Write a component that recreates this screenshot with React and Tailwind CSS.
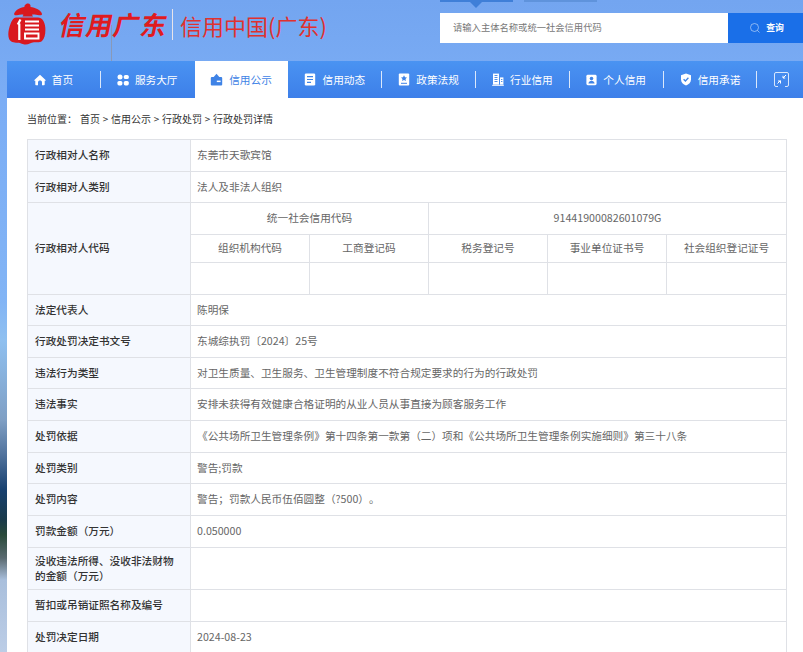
import React from "react";

const FONT = "font-['Noto_Sans_CJK_SC','Liberation_Sans',sans-serif]";

function HomeIcon() {
  return (
    <svg width="12" height="12" viewBox="0 0 12 12" fill="currentColor">
      <path d="M6 .8 11.6 6c.3.3.1.8-.3.8h-.6v3.8c0 .4-.3.7-.7.7H8V8.2C8 7.3 7 6.6 6 6.6S4 7.3 4 8.2v3.1H2c-.4 0-.7-.3-.7-.7V6.800H.7c-.4 0-.6-.5-.3-.8z" />
    </svg>
  );
}

function GridIcon() {
  return (
    <svg width="12" height="12" viewBox="0 0 12 12" fill="currentColor">
      <circle cx="3" cy="3" r="2.500" />
      <rect x="6.800" y="1" width="5" height="4" rx="1.600" />
      <rect x=".4" y="7" width="5" height="4.400" rx="1.600" />
      <rect x="6.800" y="7" width="5" height="4.400" rx="1.600" />
    </svg>
  );
}

function PublicIcon() {
  return (
    <svg width="13" height="13" viewBox="0 0 13 13">
      <path d="M6.500 .8 9.300 4H3.700z" fill="#3f83e6" />
      <rect x=".8" y="4" width="11.400" height="8.400" rx="1" fill="#3f83e6" />
      <rect x="6.800" y="7.600" width="3.800" height="1.500" fill="#fff" />
    </svg>
  );
}

function DocIcon() {
  return (
    <svg width="12" height="13" viewBox="0 0 12 13">
      <rect x=".8" y=".6" width="10.400" height="11.800" rx="1.200" fill="#fff" />
      <path d="M3 3.700h6M3 6.500h6M3 9.300h4" stroke="#3f83e6" strokeWidth="1.200" />
    </svg>
  );
}

function PolicyIcon() {
  return (
    <svg width="12" height="13" viewBox="0 0 12 13">
      <rect x=".8" y=".4" width="10.400" height="12.200" rx="1" fill="#fff" />
      <path d="M6 2.200 7 4.300l2 .2-1.500 1.500.4 2L6 7 4.100 8l.4-2L3 4.500l2-.2z" fill="#3f83e6" />
      <path d="M3 10.300h6" stroke="#3f83e6" strokeWidth="1" />
    </svg>
  );
}

function BuildingIcon() {
  return (
    <svg width="12" height="13" viewBox="0 0 12 13" fill="#fff">
      <rect x="1" y=".6" width="6" height="11" />
      <rect x="8" y="4.400" width="3.400" height="7.200" />
      <rect x=".2" y="11.800" width="11.600" height="1" />
      <path d="M2.500 2.500h3M2.500 4.500h3M2.500 6.500h3M2.500 8.500h3M9 6.500h1.400M9 8.500h1.400" stroke="#3f83e6" strokeWidth=".9" />
    </svg>
  );
}

function PersonIcon() {
  return (
    <svg width="11" height="12" viewBox="0 0 11 12">
      <rect x=".4" y=".8" width="10.200" height="10.400" rx="1.400" fill="#fff" />
      <circle cx="5.500" cy="4.600" r="1.800" fill="#3f83e6" />
      <path d="M2.400 9.400c.3-1.800 1.600-2.400 3.100-2.400s2.800.6 3.100 2.400z" fill="#3f83e6" />
    </svg>
  );
}

function ShieldIcon() {
  return (
    <svg width="12" height="13" viewBox="0 0 12 13">
      <path d="M6 .5 11 2.200v4.300c0 3-2.200 5-5 6-2.800-1-5-3-5-6V2.200z" fill="#fff" />
      <path d="M3.600 6.300 5.400 8l3-3.200" fill="none" stroke="#3f83e6" strokeWidth="1.300" />
    </svg>
  );
}

function ExpandIcon() {
  return (
    <svg width="15" height="15" viewBox="0 0 15 15" fill="none" stroke="#fff" strokeWidth=".8">
      <path d="M4 14.500H2A1.500 1.500 0 0 1 .5 13V2A1.500 1.500 0 0 1 2 .5h11A1.500 1.500 0 0 1 14.500 2v11a1.500 1.500 0 0 1-1.500 1.500h-2" />
      <path d="M12 3 9 6M9 3.800V6h2.200M3.500 11.500l3-3M4 9h2.500v2.500" strokeWidth="1" />
    </svg>
  );
}

function SearchIcon() {
  return (
    <svg width="10" height="10" viewBox="0 0 10 10" fill="none" stroke="#fff" strokeWidth=".7" className="opacity-70">
      <circle cx="4.500" cy="4.500" r="4" />
      <path d="m7.500 7.500 2 2" />
    </svg>
  );
}

function Logo() {
  return (
    <svg width="38" height="42" viewBox="0 0 38 42" className="shrink-0">
      <path d="M20 .5c2 0 3 2 2.500 3.500 4.500.3 11 3.500 11.500 7 .1 1-1 1.500-3 1.200-3-.5-6-1-7-.4l1 1.700H14.500l1-1.700c-1.500-.6-4-.2-6.500.4-2 .4-3.200-.3-2.900-1.400.8-3.300 5.900-6.500 10.400-6.900C16 2.500 18 .5 20 .5" fill="#d9181e" />
      <path d="M8 14.500h22c4 0 6.800 4 7.300 10 .4 6-.6 11-3.300 13.500-2 1.800-5 1-8 1.300-3.500.3-5 2.200-8.500 2.200-3 0-4-1.600-8-1.800-4-.2-7-.7-8.400-3.800C-.5 32 .5 26 2.500 21c1.400-3.500 3-6.500 5.500-6.500" fill="#d9181e" />
      <path d="M12.500 16.500 9.800 21.500M11.300 20.500v16.500" stroke="#fff" strokeWidth="2.200" fill="none" />
      <path d="M17 18.500h14M17 22.500h14M17 26.500h14M17 30.500h13.500v5H17z" stroke="#fff" strokeWidth="1.900" fill="none" />
    </svg>
  );
}

const navItems = [
  { label: "首页", icon: <HomeIcon />, divider: true },
  { label: "服务大厅", icon: <GridIcon />, divider: false },
  { label: "信用公示", icon: <PublicIcon />, active: true, divider: false },
  { label: "信用动态", icon: <DocIcon />, divider: true },
  { label: "政策法规", icon: <PolicyIcon />, divider: true },
  { label: "行业信用", icon: <BuildingIcon />, divider: true },
  { label: "个人信用", icon: <PersonIcon />, divider: true },
  { label: "信用承诺", icon: <ShieldIcon />, divider: true },
];

function Label({ children, rowSpan, className = "h-[32px]" }) {
  return (
    <td rowSpan={rowSpan} className={`${className} border border-[#dfe1e6] bg-[#f5f8fe] pb-[2px] pl-[7px] pr-2 text-[#333] font-medium leading-[15px]`}>
      {children}
    </td>
  );
}

function Row({ label, value, className }) {
  return (
    <tr>
      <Label className={className}>{label}</Label>
      <td colSpan={5} className="border border-[#dfe1e6] pb-px pl-[6px] text-[#666]">{value}</td>
    </tr>
  );
}

function Sub({ children, colSpan, className = "" }) {
  return (
    <td colSpan={colSpan} className={`${className} border border-[#dfe1e6] pb-px text-center text-[#666]`}>
      {children}
    </td>
  );
}

export default function App() {
  return (
    <div className={`${FONT} [text-spacing-trim:space-all] h-screen overflow-hidden bg-[linear-gradient(#73a5f0_0,#7badf5_100px,#82b4f5_300px,#8fc0f0_340px,#7f9fc4_420px,#50729c_455px,#17406f_490px,#1a3a4a_520px,#2a4a3a_535px,#5a6a70_558px,#a9bfdc_580px,#bccde6_652px)]`}>
      <header className="relative flex h-[61px]">
        <div className="flex h-[45px] items-center pl-2 pt-[3px]">
          <Logo />
          <span className="ml-[14px] -skew-x-12 text-[26px] font-bold leading-none tracking-[1px] text-[#e01b1f]">信用广东</span>
          <span className="ml-[4px] h-[31px] w-px bg-[#e8e4ea]" />
          <span className="ml-[7px] mt-[2px] text-[22px] leading-none text-[#e0312f]">信用中国(广东)</span>
        </div>
        <div className="absolute left-[111px] top-[25px] h-[36px] w-px bg-[#8899b8]" />
        <div className="ml-auto w-[363px]">
          <div className="flex gap-[11px]">
            <div className="relative h-[2px] w-[73px] bg-[#3f7fd8]">
              <div className="absolute left-[30px] top-[2px] h-0 w-0 border-x-[6px] border-t-[6px] border-x-transparent border-t-[#3f7fd8]" />
            </div>
            <div className="h-[2px] w-[73px] bg-[#5f93dc]" />
          </div>
          <div className="mt-[11px] flex h-[30px]">
            <div className="flex flex-1 items-center bg-white pl-[13px] text-[9.300px] text-[#777]">请输入主体名称或统一社会信用代码</div>
            <div className="flex w-[75px] items-center justify-center gap-[6px] bg-[#1a6fe8] pl-[3px] text-[8.800px] font-bold text-white">
              <SearchIcon />
              查询
            </div>
          </div>
        </div>
      </header>

      <main className="ml-[7px] bg-white">
        <nav className="flex h-[37px] items-stretch bg-[linear-gradient(#4a93f2,#3d7fe9)] bg-[#3f83e6] text-[10.670px] text-white">
          {navItems.map((item) => (
            <div key={item.label} className={`flex w-[93.800px] items-center ${item.active ? "bg-white text-[#3f83e6]" : ""}`}>
              <div className="flex flex-1 items-center justify-center gap-[6px]">
                {item.icon}
                <span>{item.label}</span>
              </div>
              <span className={`h-[17px] w-px ${item.divider ? "bg-[#dbe8fb]" : ""}`} />
            </div>
          ))}
          <div className="flex flex-1 items-center justify-center pl-[2px]">
            <ExpandIcon />
          </div>
        </nav>

        <div className="flex h-[41px] items-center pl-5 text-[10px] text-[#333]">
          <span className="mr-[3px]">当前位置：</span>
          <span className="[word-spacing:0.5px]">首页 &gt; 信用公示 &gt; 行政处罚 &gt; 行政处罚详情</span>
        </div>

        <div className="pl-5">
          <table className="w-[759px] table-fixed border-collapse text-[10.670px]">
            <colgroup>
              <col className="w-[163px]" />
              <col className="w-[119px]" />
              <col className="w-[119px]" />
              <col className="w-[119px]" />
              <col className="w-[119px]" />
              <col className="w-[120px]" />
            </colgroup>
            <tbody>
              <Row label="行政相对人名称" value="东莞市天歌宾馆" />
              <Row label="行政相对人类别" value="法人及非法人组织" className="h-[31px]" />
              <tr>
                <Label rowSpan={3} className="h-[32px]">行政相对人代码</Label>
                <Sub colSpan={2} className="h-[32px]">统一社会信用代码</Sub>
                <Sub colSpan={3}>91441900082601079G</Sub>
              </tr>
              <tr>
                <Sub className="h-[28px]">组织机构代码</Sub>
                <Sub>工商登记码</Sub>
                <Sub>税务登记号</Sub>
                <Sub>事业单位证书号</Sub>
                <Sub>社会组织登记证号</Sub>
              </tr>
              <tr>
                <Sub className="h-[32px]" />
                <Sub />
                <Sub />
                <Sub />
                <Sub />
              </tr>
              <Row label="法定代表人" value="陈明保" className="h-[31px]" />
              <Row label="行政处罚决定书文号" value="东城综执罚〔2024〕25号" />
              <Row label="违法行为类型" value="对卫生质量、卫生服务、卫生管理制度不符合规定要求的行为的行政处罚" className="h-[31px]" />
              <Row label="违法事实" value="安排未获得有效健康合格证明的从业人员从事直接为顾客服务工作" />
              <Row label="处罚依据" value="《公共场所卫生管理条例》第十四条第一款第（二）项和《公共场所卫生管理条例实施细则》第三十八条" />
              <Row label="处罚类别" value="警告;罚款" className="h-[31px]" />
              <Row label="处罚内容" value="警告；罚款人民币伍佰圆整（?500）。" />
              <Row label="罚款金额（万元）" value="0.050000" />
              <Row label={<>没收违法所得、没收非法财物<br />的金额（万元）</>} value="" className="h-[42px]" />
              <Row label="暂扣或吊销证照名称及编号" value="" />
              <Row label="处罚决定日期" value="2024-08-23" className="h-[31px]" />
            </tbody>
          </table>
        </div>
      </main>
    </div>
  );
}
